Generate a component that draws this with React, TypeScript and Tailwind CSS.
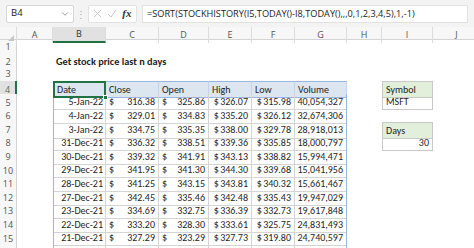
import { ChevronDown } from 'lucide-react'

const cols = 'grid grid-cols-[17px_36px_53px_53px_50px_43px_43px_52px_35px_51px_48px]'
const letters = ['A', 'B', 'C', 'D', 'E', 'F', 'G', 'H', 'I', 'J']

type Quote = [string, string, string, string, string, string]

const quotes: Quote[] = [
  ['5-Jan-22', '316.38', '325.86', '326.07', '315.98', '40,054,327'],
  ['4-Jan-22', '329.01', '334.83', '335.20', '326.12', '32,674,306'],
  ['3-Jan-22', '334.75', '335.35', '338.00', '329.78', '28,918,013'],
  ['31-Dec-21', '336.32', '338.51', '339.36', '335.85', '18,000,797'],
  ['30-Dec-21', '339.32', '341.91', '343.13', '338.82', '15,994,471'],
  ['29-Dec-21', '341.95', '341.30', '344.30', '339.68', '15,041,956'],
  ['28-Dec-21', '341.25', '343.15', '343.81', '340.32', '15,661,467'],
  ['27-Dec-21', '342.45', '335.46', '342.48', '335.43', '19,947,029'],
  ['23-Dec-21', '334.69', '332.75', '336.39', '332.73', '19,617,848'],
  ['22-Dec-21', '333.20', '328.30', '333.61', '325.75', '24,831,493'],
  ['21-Dec-21', '327.29', '323.29', '327.73', '319.80', '24,740,597'],
  ['20-Dec-21', '320.79', '320.05', '322.94', '317.25', '34,989,963'],
]

const cellFont = "font-['Carlito','Lato',sans-serif] text-[10px] text-[#1e1e1e]"
const bodyCell = 'h-full border-r border-b border-[#d4d4d4] flex items-center'

function FormulaBar() {
  return (
    <div className="h-[27px] bg-[#f3f3f3] flex items-center px-[6px] font-['Open_Sans',sans-serif] text-[9.5px] text-[#222]">
      <div className="w-[68px] h-[18px] bg-white border border-[#d6d6d6] rounded-[2px] flex items-center justify-between pl-[4px] pr-[3px]">
        <span>B4</span>
        <ChevronDown size={10} strokeWidth={1.6} className="text-[#666]" />
      </div>
      <span className="w-[14px] text-center text-[#aaa] text-[10px] leading-none">⋮</span>
      <div className="w-[49px] h-[18px] bg-white border border-[#e2e2e2] rounded-[2px] flex items-center justify-around px-[2px]">
        <svg width="9" height="9" viewBox="0 0 10 10" fill="none" stroke="#c4c4c4" strokeWidth="1">
          <path d="M1 1l8 8M9 1l-8 8" />
        </svg>
        <svg width="10" height="9" viewBox="0 0 10 9" fill="none" stroke="#c4c4c4" strokeWidth="1">
          <path d="M1 5l3 3 5-7" />
        </svg>
        <span className="font-['Liberation_Serif',serif] italic font-bold text-[11px] text-[#333]">fx</span>
      </div>
      <div className="ml-[5px] flex-1 h-[18px] bg-white border border-[#e2e2e2] flex items-center pl-[4px] whitespace-nowrap overflow-hidden text-[9.2px]">
        =SORT(STOCKHISTORY(I5,TODAY()-I8,TODAY(),,,0,1,2,3,4,5),1,-1)
      </div>
    </div>
  )
}

function ColumnHeaders() {
  return (
    <div className={`${cols} h-[13px] bg-[#f7f7f7] border-b border-[#d4d4d4] font-['Open_Sans',sans-serif] text-[9px] text-[#555]`}>
      <div className="relative border-r border-[#dcdcdc]">
        <div className="absolute right-[2px] bottom-[2px] w-0 h-0 border-l-[6px] border-l-transparent border-b-[6px] border-b-[#c8c8c8]" />
      </div>
      {letters.map((l) => (
        <div
          key={l}
          className={`flex items-center justify-center border-r border-[#dcdcdc] ${l === 'B' ? 'bg-[#e1e1e1] border-b-2 border-b-[#217346] text-[#333]' : ''}`}
        >
          {l}
        </div>
      ))}
    </div>
  )
}

function TableRow({ q }: { q: Quote }) {
  return (
    <>
      <div className={`${bodyCell} justify-end pr-[2px] border-l border-l-[#9bb5dc]`}>{q[0]}</div>
      <div className={`${bodyCell} justify-between pl-[3px] pr-[3px]`}>
        <span>$</span>
        <span>{q[1]}</span>
      </div>
      <div className={`${bodyCell} justify-between pl-[3px] pr-[3px]`}>
        <span>$</span>
        <span>{q[2]}</span>
      </div>
      <div className={`${bodyCell} justify-end pr-[3px]`}>$&#8202;{q[3]}</div>
      <div className={`${bodyCell} justify-end pr-[3px]`}>$&#8202;{q[4]}</div>
      <div className={`${bodyCell} justify-end pr-[3px] border-r-[#9bb5dc]`}>{q[5]}</div>
    </>
  )
}

function HeaderRow() {
  const th = 'h-full bg-[#dce6f1] border-t border-b border-t-[#9bb5dc] border-b-[#9bb5dc] border-r border-r-[#c3d3e9] flex items-center pl-[3px]'
  return (
    <>
      <div className={`${th} relative border-l border-l-[#9bb5dc]`}>
        Date
        <div className="absolute -left-[1px] -top-[1px] -right-[1px] -bottom-[1px] border-2 border-[#217346]" />
        <div className="absolute -right-[3px] -bottom-[3px] w-[5px] h-[5px] bg-[#217346] border border-white" />
      </div>
      <div className={th}>Close</div>
      <div className={th}>Open</div>
      <div className={th}>High</div>
      <div className={th}>Low</div>
      <div className={`${th} border-r-[#9bb5dc]`}>Volume</div>
    </>
  )
}

function SideCell({ row }: { row: number }) {
  if (row === 4) return <div className="h-full bg-[#e2efda] border border-[#c9c9c9] flex items-center pl-[3px]">Symbol</div>
  if (row === 5) return <div className="h-full border-x border-b border-[#c9c9c9] flex items-center pl-[3px]">MSFT</div>
  if (row === 7) return <div className="h-full bg-[#e2efda] border border-[#c9c9c9] flex items-center pl-[3px]">Days</div>
  if (row === 8) return <div className="h-full border-x border-b border-[#c9c9c9] flex items-center justify-end pr-[3px]">30</div>
  return <div />
}

function SheetRow({ row }: { row: number }) {
  const selected = row === 4
  return (
    <div className={`${cols} h-[13.6px] ${cellFont}`}>
      <div
        className={`flex items-center justify-center font-['Open_Sans',sans-serif] text-[9px] border-r ${selected ? 'bg-[#e1e1e1] border-r-2 border-r-[#217346] text-[#4a7a5c]' : 'bg-[#f7f7f7] border-r-[#d4d4d4] text-[#555]'}`}
      >
        {row}
      </div>
      <div />
      {row === 2 ? (
        <div className="col-span-6 flex items-center pl-[3px] font-bold text-[10.3px] whitespace-nowrap">Get stock price last n days</div>
      ) : row === 4 ? (
        <HeaderRow />
      ) : row >= 5 ? (
        <TableRow q={quotes[row - 5]} />
      ) : (
        <div className="col-span-6" />
      )}
      <div />
      <SideCell row={row} />
      <div />
    </div>
  )
}

export default function App() {
  const rows = Array.from({ length: 16 }, (_, i) => i + 1)
  return (
    <div className="w-[474px] h-[248px] overflow-hidden bg-white">
      <FormulaBar />
      <ColumnHeaders />
      {rows.map((r) => (
        <SheetRow key={r} row={r} />
      ))}
    </div>
  )
}
